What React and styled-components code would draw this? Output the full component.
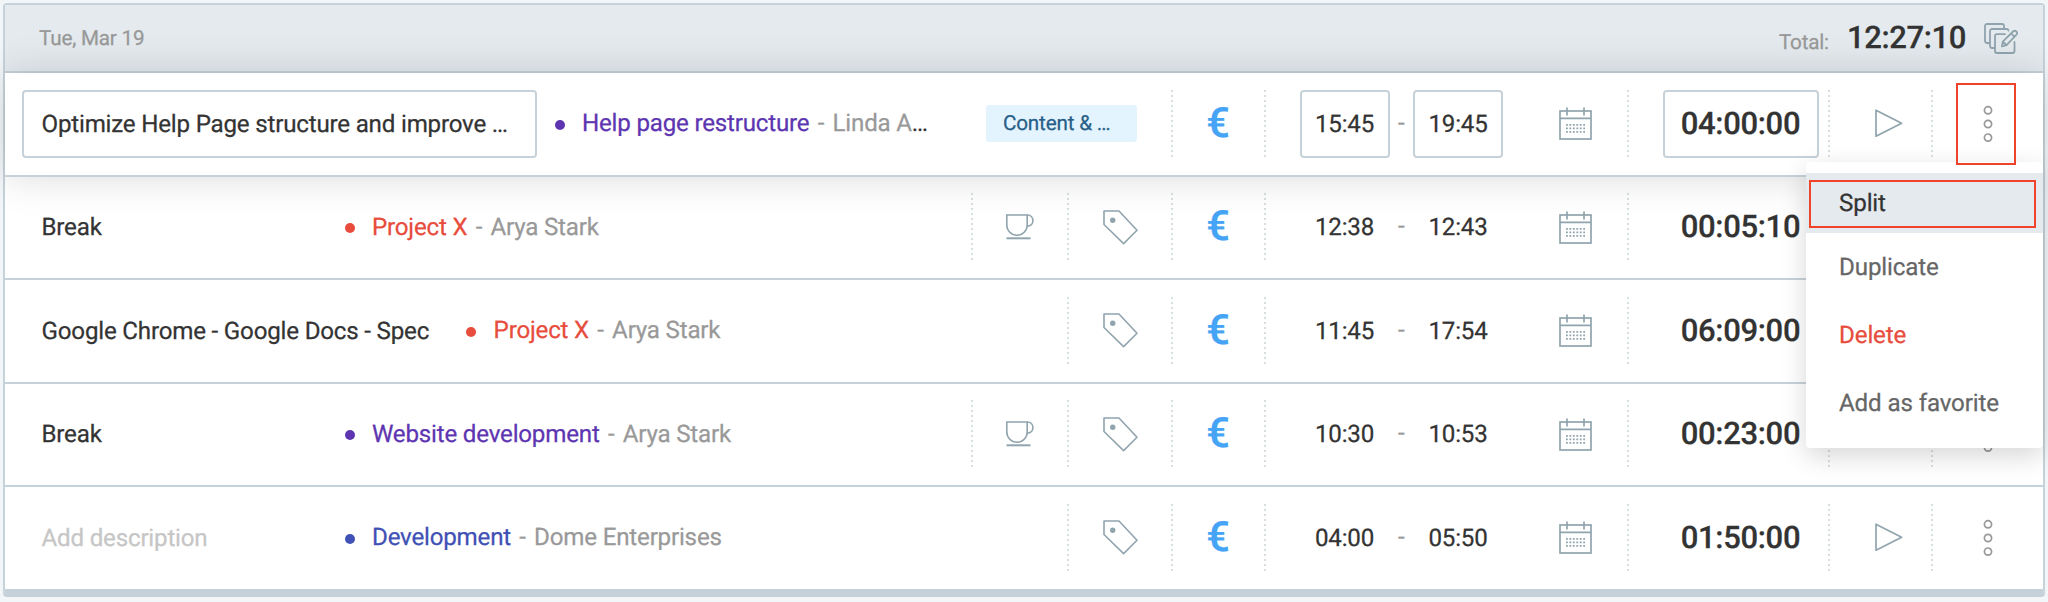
import styled, { createGlobalStyle, css } from 'styled-components';

const GlobalStyle = createGlobalStyle`
* {
    box-sizing: border-box;
}
body {
    margin: 0;
    background: #f2f6f9;
    font-family: Roboto, "Liberation Sans", sans-serif;
    font-size: 24.15px;
    letter-spacing: -0.2px;
    color: #333;
    text-rendering: geometricPrecision;
    -webkit-text-stroke: 0.25px;
}
`;

const ENTRIES = [
    { id: 1, text: 'Optimize Help Page structure and improve …', color: '#5e35b1', project: 'Help page restructure', client: 'Linda A', cut: true, tag: 'Content & …', start: '15:45', end: '19:45', total: '04:00:00', active: true },
    { id: 2, text: 'Break', color: '#e74c3c', project: 'Project X', client: 'Arya Stark', isBreak: true, start: '12:38', end: '12:43', total: '00:05:10' },
    { id: 3, text: 'Google Chrome - Google Docs - Spec', color: '#e74c3c', project: 'Project X', client: 'Arya Stark', start: '11:45', end: '17:54', total: '06:09:00' },
    { id: 4, text: 'Break', color: '#5e35b1', project: 'Website development', client: 'Arya Stark', isBreak: true, start: '10:30', end: '10:53', total: '00:23:00' },
    { id: 5, text: '', color: '#3f51b5', project: 'Development', client: 'Dome Enterprises', start: '04:00', end: '05:50', total: '01:50:00' },
];

const BulkEditIcon = () => (
    <svg width="34" height="31" viewBox="0 0 34 31" fill="none" stroke="#90a4ae" strokeWidth="1.8" strokeLinecap="round" strokeLinejoin="round">
        <path d="M5 20H3a2 2 0 0 1-2-2V3a2 2 0 0 1 2-2h15a2 2 0 0 1 2 2v2.5" />
        <path d="M10.2 25H8a2 2 0 0 1-2-2V8a2 2 0 0 1 2-2h14.5a2 2 0 0 1 2 1.6" />
        <path d="M21 11.2h-8a2 2 0 0 0-2 2V28a2 2 0 0 0 2 2h15.5a2 2 0 0 0 2-2v-9" />
        <path d="M18 23.4l.8-4.8L29 8.5a2 2 0 0 1 3.3 3.3L22.5 22.2zM18.8 18.6l3.7 3.6M27 10.4l3.3 3.3" />
    </svg>
);

const CupIcon = () => (
    <svg width="28" height="26" viewBox="0 0 28 26" fill="none" stroke="#90a4ae" strokeWidth="1.6">
        <path d="M.8 1h20.4v10a10.2 10.2 0 0 1-20.4 0z" />
        <path d="M21.2 1c7.6 0 7.6 11.2 0 11.2" />
        <path d="M.5 24.3H24.5" strokeWidth="2" />
    </svg>
);

const TagIcon = () => (
    <svg width="35" height="35" viewBox="0 0 35 35" fill="none" stroke="#90a4ae" strokeWidth="1.6" strokeLinejoin="round">
        <path d="M1 1h15l18 19.3L20.6 33.6 1 14.5z" />
        <circle cx="9.7" cy="10.3" r="2.7" fill="#90a4ae" stroke="none" />
    </svg>
);

const CalendarIcon = () => (
    <svg width="33" height="33" viewBox="0 0 33 33" fill="none" stroke="#90a4ae" strokeWidth="1.7">
        <rect x="1" y="4" width="31" height="28" />
        <path d="M1 11.3h31M8 .5v8M25 .5v8" />
        <path d="M7 17.8h19M7 21.3h19M7 24.8h19" strokeDasharray="1.8 1.65" strokeWidth="1.8" />
    </svg>
);

const PlayIcon = () => (
    <svg width="28" height="29" viewBox="0 0 28 29" fill="none" stroke="#90a4ae" strokeWidth="1.7" strokeLinejoin="round">
        <path d="M1 1.2v26L26.6 14.2z" />
    </svg>
);

const DotsIcon = () => (
    <svg width="10" height="38" viewBox="0 0 10 38" fill="none" stroke="#999" strokeWidth="1.7">
        <circle cx="5" cy="5.3" r="3.6" />
        <circle cx="5" cy="19" r="3.6" />
        <circle cx="5" cy="32.6" r="3.6" />
    </svg>
);

const Entry = ({ item }) => (
    <Row $active={item.active}>
        <Details>
            <Description $active={item.active} $empty={!item.text}>
                {item.text || 'Add description'}
            </Description>
            <Project>
                <Dot $color={item.color} />
                <ProjectText>
                    <ProjectName $color={item.color}>{item.project}</ProjectName>
                    <Client><Dash>-</Dash>{item.client}</Client>
                    {item.cut && '…'}
                </ProjectText>
            </Project>
        </Details>
        {item.isBreak && <Cell $width={96.5} $shift={2}><CupIcon /></Cell>}
        {item.tag
            ? <TagCell><Chip>{item.tag}</Chip></TagCell>
            : <Cell $width={103.5} $shift={3}><TagIcon /></Cell>}
        <Cell $width={93.5} $shift={1.5}><Euro>€</Euro></Cell>
        <Times>
            <Time $active={item.active}>{item.start}</Time>
            <TimeDash>-</TimeDash>
            <Time $active={item.active}>{item.end}</Time>
            <CalendarButton><CalendarIcon /></CalendarButton>
        </Times>
        <DurationCell>
            <Duration $active={item.active}>{item.total}</Duration>
        </DurationCell>
        <Cell $width={103.5} $shift={19}><PlayIcon /></Cell>
        <MoreCell>
            <MoreButton $active={item.active}><DotsIcon /></MoreButton>
        </MoreCell>
    </Row>
);

const App = () => (
    <Page>
        <GlobalStyle />
        <Card>
            <Header>
                <DateLabel>Tue, Mar 19</DateLabel>
                <Summary>
                    <TotalLabel>Total:</TotalLabel>
                    <TotalTime>12:27:10</TotalTime>
                    <BulkEditIcon />
                </Summary>
            </Header>
            {ENTRIES.map((item) => <Entry key={item.id} item={item} />)}
            <Menu>
                <MenuItem $selected><Highlight>Split</Highlight></MenuItem>
                <MenuItem>Duplicate</MenuItem>
                <MenuItem $danger>Delete</MenuItem>
                <MenuItem>Add as favorite</MenuItem>
            </Menu>
        </Card>
    </Page>
);

const Page = styled.div`
height: 602px;
overflow: hidden;
padding: 3px 3px 0 3px;
`;

const Card = styled.div`
position: relative;
height: 594px;
background: #fff;
border: 2px solid #c6d2d9;
border-bottom: 8px solid #c6d0d9;
border-radius: 4px;
`;

const Header = styled.div`
display: flex;
justify-content: space-between;
height: 68px;
padding: 0 25px 0 34px;
background: #e4eaee;
border-bottom: 2px solid #c6d2d9;
color: #999;
font-size: 20.7px;
`;

const DateLabel = styled.span`
line-height: 24px;
padding-top: 22px;
`;

const Summary = styled.div`
display: flex;
align-items: flex-start;
svg {
    margin: 18px 0 0 18px;
}
`;

const TotalLabel = styled.span`
line-height: 24px;
padding-top: 26px;
`;

const TotalTime = styled.span`
margin-left: 18px;
padding-top: 15px;
line-height: 36px;
font-size: 31.05px;
font-weight: 500;
letter-spacing: -0.4px;
color: #333;
`;

const Row = styled.div`
display: flex;
align-items: center;
height: 103.5px;
border-bottom: 2px solid #c6d2d9;
&:nth-child(6) {
    border-bottom-color: transparent;
}
${(p) => p.$active && css`
    position: relative;
    background: #fff;
    box-shadow: 0 0 40px rgba(0, 0, 0, 0.15);
`}
`;

const Details = styled.div`
display: flex;
align-items: center;
flex: 1;
min-width: 0;
padding-left: 17px;
`;

const boxed = css`
border: 2px solid ${(p) => (p.$active ? '#c6d2d9' : 'transparent')};
border-radius: 4px;
`;

const Description = styled.div`
${boxed}
flex: none;
width: ${(p) => (p.$active ? '515px' : 'auto')};
min-width: 305px;
height: 68px;
line-height: 65px;
padding: 0 17.5px;
white-space: nowrap;
color: ${(p) => (p.$empty ? '#c6c6c6' : '#333')};
`;

const Project = styled.div`
display: flex;
align-items: center;
margin-left: 17.5px;
`;

const Dot = styled.i`
flex: none;
width: 10px;
height: 10px;
margin: 2px 17.5px 0 0;
border-radius: 50%;
background: ${(p) => p.$color};
`;

const ProjectText = styled.div`
white-space: nowrap;
line-height: 34px;
padding-bottom: 1px;
`;

const ProjectName = styled.span`
color: ${(p) => p.$color};
`;

const Client = styled.span`
color: #999;
`;

const Dash = styled.span`
margin: 0 8.3px;
`;

const Cell = styled.div`
display: flex;
align-items: center;
justify-content: center;
flex: none;
width: ${(p) => p.$width}px;
height: 68px;
padding-left: ${(p) => p.$shift || 0}px;
background: repeating-linear-gradient(#d8dfe3 0 2px, transparent 2px 5px) left top / 2px 100% no-repeat;
`;

const TagCell = styled.div`
display: flex;
flex: none;
width: 185px;
`;

const Chip = styled.span`
width: 151px;
height: 37px;
padding: 0 17.5px;
border-radius: 3px;
background: #e4f4ff;
color: #285f88;
font-size: 20.7px;
line-height: 38px;
white-space: nowrap;
`;

const Euro = styled.span`
font-size: 41.5px;
line-height: 66px;
font-weight: 500;
color: #45a4f5;
`;

const Times = styled(Cell)`
width: 363px;
justify-content: flex-start;
padding-left: 35.5px;
`;

const Time = styled.div`
${boxed}
width: 90px;
height: 68px;
line-height: 65px;
text-align: center;
`;

const TimeDash = styled.span`
width: 23.5px;
text-align: center;
color: #999;
padding-bottom: 2px;
`;

const CalendarButton = styled.span`
display: flex;
margin-left: 56px;
`;

const DurationCell = styled(Cell)`
width: 200.5px;
justify-content: flex-start;
padding-left: 35.5px;
`;

const Duration = styled.div`
${boxed}
width: 156px;
height: 68px;
line-height: 64px;
text-align: center;
font-size: 31.05px;
font-weight: 500;
letter-spacing: -0.35px;
`;

const MoreCell = styled(Cell)`
width: 112px;
justify-content: flex-start;
padding-left: 25px;
`;

const MoreButton = styled.div`
display: flex;
align-items: center;
flex: none;
width: 60px;
height: 82px;
padding-left: 25px;
border: 2px solid ${(p) => (p.$active ? '#f0432c' : 'transparent')};
${(p) => p.$active && 'position: relative; z-index: 2;'}
`;

const Menu = styled.div`
position: absolute;
z-index: 1;
top: 157px;
right: 0;
width: 237px;
height: 286px;
padding-top: 11px;
border-radius: 4px;
background: #fff;
letter-spacing: -0.13px;
box-shadow: 0 8px 26px rgba(0, 0, 0, 0.16);
`;

const MenuItem = styled.div`
height: ${(p) => (p.$selected ? '60px' : '68px')};
line-height: 68px;
padding-left: ${(p) => (p.$selected ? '3px' : '33px')};
padding-top: ${(p) => (p.$selected ? '7px' : '0')};
background: ${(p) => (p.$selected ? '#e4eaee' : 'transparent')};
color: ${(p) => (p.$danger ? '#e74c3c' : '#666')};
`;

const Highlight = styled.div`
width: 227px;
height: 48px;
padding-left: 28px;
border: 2px solid #f0432c;
line-height: 43px;
color: #333;
`;

export default App;
